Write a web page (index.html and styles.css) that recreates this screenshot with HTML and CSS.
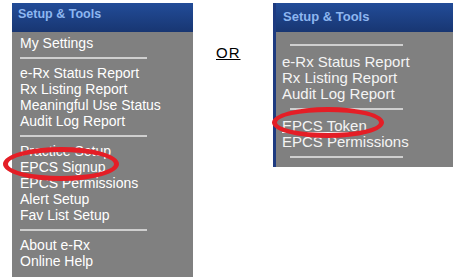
FILE: index.html
```html
<!DOCTYPE html>
<html>
<head>
<meta charset="utf-8">
<link rel="stylesheet" href="styles.css">
</head>
<body>
<div class="page">
  <div class="panel panel-left">
    <div class="head">Setup &amp; Tools</div>
    <div class="body">
      <div class="item">My Settings</div>
      <div class="sep"></div>
      <div class="item">e-Rx Status Report</div>
      <div class="item">Rx Listing Report</div>
      <div class="item">Meaningful Use Status</div>
      <div class="item">Audit Log Report</div>
      <div class="sep"></div>
      <div class="item">Practice Setup</div>
      <div class="item">EPCS Signup</div>
      <div class="item">EPCS Permissions</div>
      <div class="item">Alert Setup</div>
      <div class="item">Fav List Setup</div>
      <div class="sep"></div>
      <div class="item">About e-Rx</div>
      <div class="item">Online Help</div>
    </div>
    <div class="ring ring-left"></div>
  </div>
  <div class="middle"><span class="or">OR</span></div>
  <div class="panel panel-right">
    <div class="head">Setup &amp; Tools</div>
    <div class="body">
      <div class="sep"></div>
      <div class="item">e-Rx Status Report</div>
      <div class="item">Rx Listing Report</div>
      <div class="item">Audit Log Report</div>
      <div class="sep"></div>
      <div class="item"><span class="link">EPCS Token</span></div>
      <div class="item">EPCS Permissions</div>
      <div class="sep"></div>
    </div>
    <div class="ring ring-right"></div>
  </div>
</div>
</body>
</html>
```
FILE: styles.css
```css
html, body { margin: 0; padding: 0; background: #fff; }
body { font-family: "Liberation Sans", Arial, sans-serif; }
.page {
  display: flex;
  align-items: flex-start;
  padding: 3px 0 0 12px;
}
.panel { position: relative; background: #808080; }
.head {
  height: 29px;
  box-sizing: border-box;
  background: linear-gradient(#224c98, #183672);
  color: #8db6f0;
  font-weight: bold;
}
.item { color: #fff; white-space: nowrap; }
.sep { height: 2px; background: #cfcfcf; }

.panel-left { width: 181px; }
.panel-left .head { padding: 4px 0 0 6px; font-size: 12.5px; line-height: 15px; }
.panel-left .body { padding: 3px 0 8px 8px; }
.panel-left .item { font-size: 14px; line-height: 16px; }
.panel-left .sep { width: 127px; margin: 6px 0; }

.middle { width: 80px; padding: 41px 0 0 23px; box-sizing: border-box; }
.or {
  font-size: 15px;
  line-height: 17px;
  letter-spacing: 1px;
  color: #000;
  text-decoration: underline;
}

.panel-right { width: 180px; box-sizing: border-box; border-left: 3px solid #1d3a80; }
.panel-right .head { padding: 6px 0 0 7px; font-size: 13px; line-height: 16px; }
.panel-right .body { padding: 6px 0 9px 6px; }
.panel-right .item { font-size: 15px; line-height: 16px; color: #f4f4f4; }
.panel-right .sep { width: 113px; margin: 6px 0 8px 8px; }
.panel-right .sep:first-child { margin-top: 6px; }
.panel-right .sep:last-child { margin-bottom: 0; }
.link { text-decoration: underline; }

.ring {
  position: absolute;
  box-sizing: border-box;
  border: 5px solid #e41e26;
  border-radius: 50%;
}
.ring-left { left: -9px; top: 144px; width: 116px; height: 34px; }
.ring-right { left: -4px; top: 104px; width: 112px; height: 31px; }
```
